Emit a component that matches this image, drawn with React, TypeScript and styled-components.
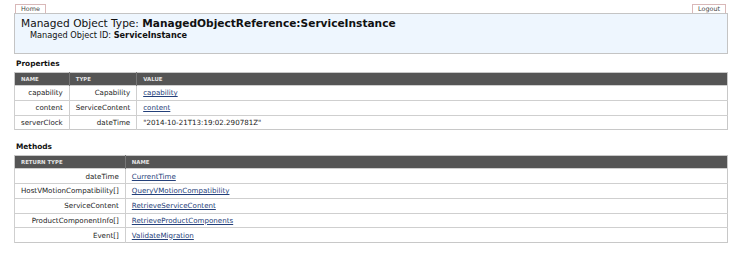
import React from "react";
import styled, { createGlobalStyle } from "styled-components";

const GlobalStyle = createGlobalStyle`
  html, body {
    margin: 0;
    padding: 0;
    background: #ffffff;
  }
  body {
    font-family: "DejaVu Sans", Verdana, sans-serif;
    color: #111;
  }
`;

const Page = styled.div`
  padding: 4px 10px 0 14px;
`;

const TabRow = styled.div`
  display: flex;
  justify-content: space-between;
  padding: 0 2px 0 1px;
`;

const Tab = styled.a`
  display: block;
  height: 8px;
  line-height: 8px;
  padding: 0 5px 0 5px;
  font-size: 6.4px;
  color: #444;
  text-decoration: none;
  background: #fff;
  border: 1px solid #d9b8b8;
  border-bottom: none;
`;

const HeaderBox = styled.div`
  height: 39px;
  background: #eef6fe;
  border: 1px solid #c4c4c4;
  padding: 0 6px;
`;

const Title = styled.div`
  font-size: 10.6px;
  line-height: 13px;
  padding-top: 3px;
`;

const SubTitle = styled.div`
  font-size: 8.2px;
  line-height: 10px;
  padding-left: 9px;
`;

const SectionTitle = styled.div<{ $top: number }>`
  font-size: 7.4px;
  font-weight: bold;
  line-height: 10px;
  margin-top: ${(p) => p.$top}px;
  padding-left: 2px;
  margin-bottom: 3px;
`;

const Table = styled.table`
  width: 100%;
  border-collapse: collapse;
  border: 1px solid #c8c8c8;
  font-size: 7.1px;
`;

const HeadCell = styled.th<{ $w?: number }>`
  background: #555555;
  color: #e4e4e4;
  font-size: 5.4px;
  font-weight: bold;
  text-align: left;
  height: 13px;
  padding: 0 6px;
  width: ${(p) => (p.$w ? `${p.$w}px` : "auto")};
  box-sizing: border-box;
  border-left: 1px solid #777;
  &:first-child {
    border-left: none;
  }
`;

const Row = styled.tr`
  border-top: 1px solid #cfcfcf;
`;

const Cell = styled.td<{ $right?: boolean }>`
  height: 14.75px;
  padding: 0 6px;
  box-sizing: border-box;
  text-align: ${(p) => (p.$right ? "right" : "left")};
  border-left: 1px solid #cfcfcf;
  color: #222;
  white-space: nowrap;
`;

const Link = styled.a`
  color: #24407a;
  text-decoration: underline;
`;

const properties = [
  { name: "capability", type: "Capability", value: "capability", link: true },
  { name: "content", type: "ServiceContent", value: "content", link: true },
  {
    name: "serverClock",
    type: "dateTime",
    value: '"2014-10-21T13:19:02.290781Z"',
    link: false,
  },
];

const methods = [
  { ret: "dateTime", name: "CurrentTime" },
  { ret: "HostVMotionCompatibility[]", name: "QueryVMotionCompatibility" },
  { ret: "ServiceContent", name: "RetrieveServiceContent" },
  { ret: "ProductComponentInfo[]", name: "RetrieveProductComponents" },
  { ret: "Event[]", name: "ValidateMigration" },
];

export default function App() {
  return (
    <>
      <GlobalStyle />
      <Page>
        <TabRow>
          <Tab href="#">Home</Tab>
          <Tab href="#">Logout</Tab>
        </TabRow>
        <HeaderBox>
          <Title>
            Managed Object Type: <b>ManagedObjectReference:ServiceInstance</b>
          </Title>
          <SubTitle>
            Managed Object ID: <b>ServiceInstance</b>
          </SubTitle>
        </HeaderBox>

        <SectionTitle $top={5}>Properties</SectionTitle>
        <Table>
          <thead>
            <tr>
              <HeadCell $w={53}>NAME</HeadCell>
              <HeadCell $w={66}>TYPE</HeadCell>
              <HeadCell>VALUE</HeadCell>
            </tr>
          </thead>
          <tbody>
            {properties.map((p) => (
              <Row key={p.name}>
                <Cell $right>{p.name}</Cell>
                <Cell $right>{p.type}</Cell>
                <Cell>{p.link ? <Link href="#">{p.value}</Link> : p.value}</Cell>
              </Row>
            ))}
          </tbody>
        </Table>

        <SectionTitle $top={12}>Methods</SectionTitle>
        <Table>
          <thead>
            <tr>
              <HeadCell $w={109}>RETURN TYPE</HeadCell>
              <HeadCell>NAME</HeadCell>
            </tr>
          </thead>
          <tbody>
            {methods.map((m) => (
              <Row key={m.name}>
                <Cell $right>{m.ret}</Cell>
                <Cell>
                  <Link href="#">{m.name}</Link>
                </Cell>
              </Row>
            ))}
          </tbody>
        </Table>
      </Page>
    </>
  );
}
